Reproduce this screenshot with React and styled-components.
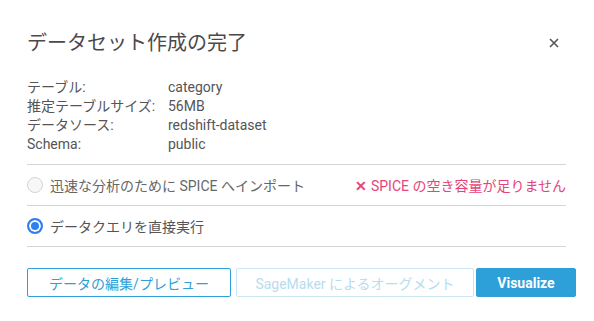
import React, { useState } from "react";
import styled, { createGlobalStyle } from "styled-components";

const GlobalStyle = createGlobalStyle`
  html, body {
    margin: 0;
    padding: 0;
    background: #fff;
  }
  body {
    font-family: Roboto, "Noto Sans CJK JP", sans-serif;
    color: #444;
  }
`;

const Modal = styled.div`
  width: 594px;
  height: 322px;
  box-sizing: border-box;
  padding: 29px 28px 0 27px;
  border-bottom: 1px solid #d5d5d5;
`;

const Header = styled.div`
  display: flex;
  align-items: center;
  justify-content: space-between;
  height: 28px;
`;

const Title = styled.h2`
  margin: 0;
  font-size: 20px;
  font-weight: 400;
  line-height: 28px;
  color: #4a4a4a;
`;

const Close = styled.button`
  border: 0;
  background: none;
  padding: 0;
  width: 16px;
  height: 16px;
  margin-right: 4px;
  display: flex;
  align-items: center;
  justify-content: center;
  cursor: pointer;
`;

const Info = styled.dl`
  display: grid;
  grid-template-columns: 141px 1fr;
  margin: 21px 0 10px;
  font-size: 14px;
  line-height: 19px;
  color: #555;
  dt, dd {
    margin: 0;
  }
`;

const Option = styled.label`
  display: flex;
  align-items: center;
  height: 40px;
  border-top: 1px solid #d5d5d5;
  font-size: 14px;
  color: #555;
  &:last-of-type {
    border-bottom: 1px solid #d5d5d5;
  }
`;

const Radio = styled.span`
  width: 16px;
  height: 16px;
  box-sizing: border-box;
  border-radius: 50%;
  margin-right: 7px;
  flex: none;
  border: ${(p) => (p.$checked ? "2px solid #2f7ef2" : "1px solid #d4d4d4")};
  background: ${(p) => (p.$checked ? "#2f7ef2" : "#f7f7f7")};
  box-shadow: ${(p) => (p.$checked ? "inset 0 0 0 2px #fff" : "none")};
`;

const OptionText = styled.span`
  flex: 1;
  color: ${(p) => (p.$disabled ? "#666" : "#555")};
`;

const Error = styled.span`
  color: #e5457a;
  font-size: 14px;
  b {
    font-weight: 700;
  }
`;

const Actions = styled.div`
  display: flex;
  margin-top: 21px;
  margin-right: -10px;
`;

const Button = styled.button`
  height: 29px;
  box-sizing: border-box;
  font-family: inherit;
  font-size: 14px;
  border-radius: 2px;
  padding: 0;
  width: ${(p) => p.$w}px;
  margin-right: ${(p) => p.$gap || 0}px;
  border: 1px solid ${(p) => (p.$disabled ? "#cbe7f5" : "#2d9fd9")};
  background: ${(p) => (p.$primary ? "#2d9fd9" : "#fff")};
  color: ${(p) => (p.$primary ? "#fff" : p.$disabled ? "#b8dcef" : "#2d9fd9")};
  font-weight: ${(p) => (p.$primary ? 700 : 400)};
  cursor: ${(p) => (p.$disabled ? "default" : "pointer")};
`;

const rows = [
  ["テーブル:", "category"],
  ["推定テーブルサイズ:", "56MB"],
  ["データソース:", "redshift-dataset"],
  ["Schema:", "public"],
];

export default function App() {
  const [mode, setMode] = useState("direct");
  return (
    <>
      <GlobalStyle />
      <Modal>
        <Header>
          <Title>データセット作成の完了</Title>
          <Close aria-label="close">
            <svg width="10" height="10" viewBox="0 0 10 10">
              <path d="M1 1L9 9M9 1L1 9" stroke="#555" strokeWidth="1.6" />
            </svg>
          </Close>
        </Header>
        <Info>
          {rows.map(([k, v]) => (
            <React.Fragment key={k}>
              <dt>{k}</dt>
              <dd>{v}</dd>
            </React.Fragment>
          ))}
        </Info>
        <Option>
          <Radio />
          <OptionText $disabled>迅速な分析のために SPICE へインポート</OptionText>
          <Error><b>✕</b> SPICE の空き容量が足りません</Error>
        </Option>
        <Option onClick={() => setMode("direct")}>
          <Radio $checked={mode === "direct"} />
          <OptionText>データクエリを直接実行</OptionText>
        </Option>
        <Actions>
          <Button $w={204} $gap={5}>データの編集/プレビュー</Button>
          <Button $w={238} $gap={2} $disabled>SageMaker によるオーグメント</Button>
          <Button $w={100} $primary>Visualize</Button>
        </Actions>
      </Modal>
    </>
  );
}
